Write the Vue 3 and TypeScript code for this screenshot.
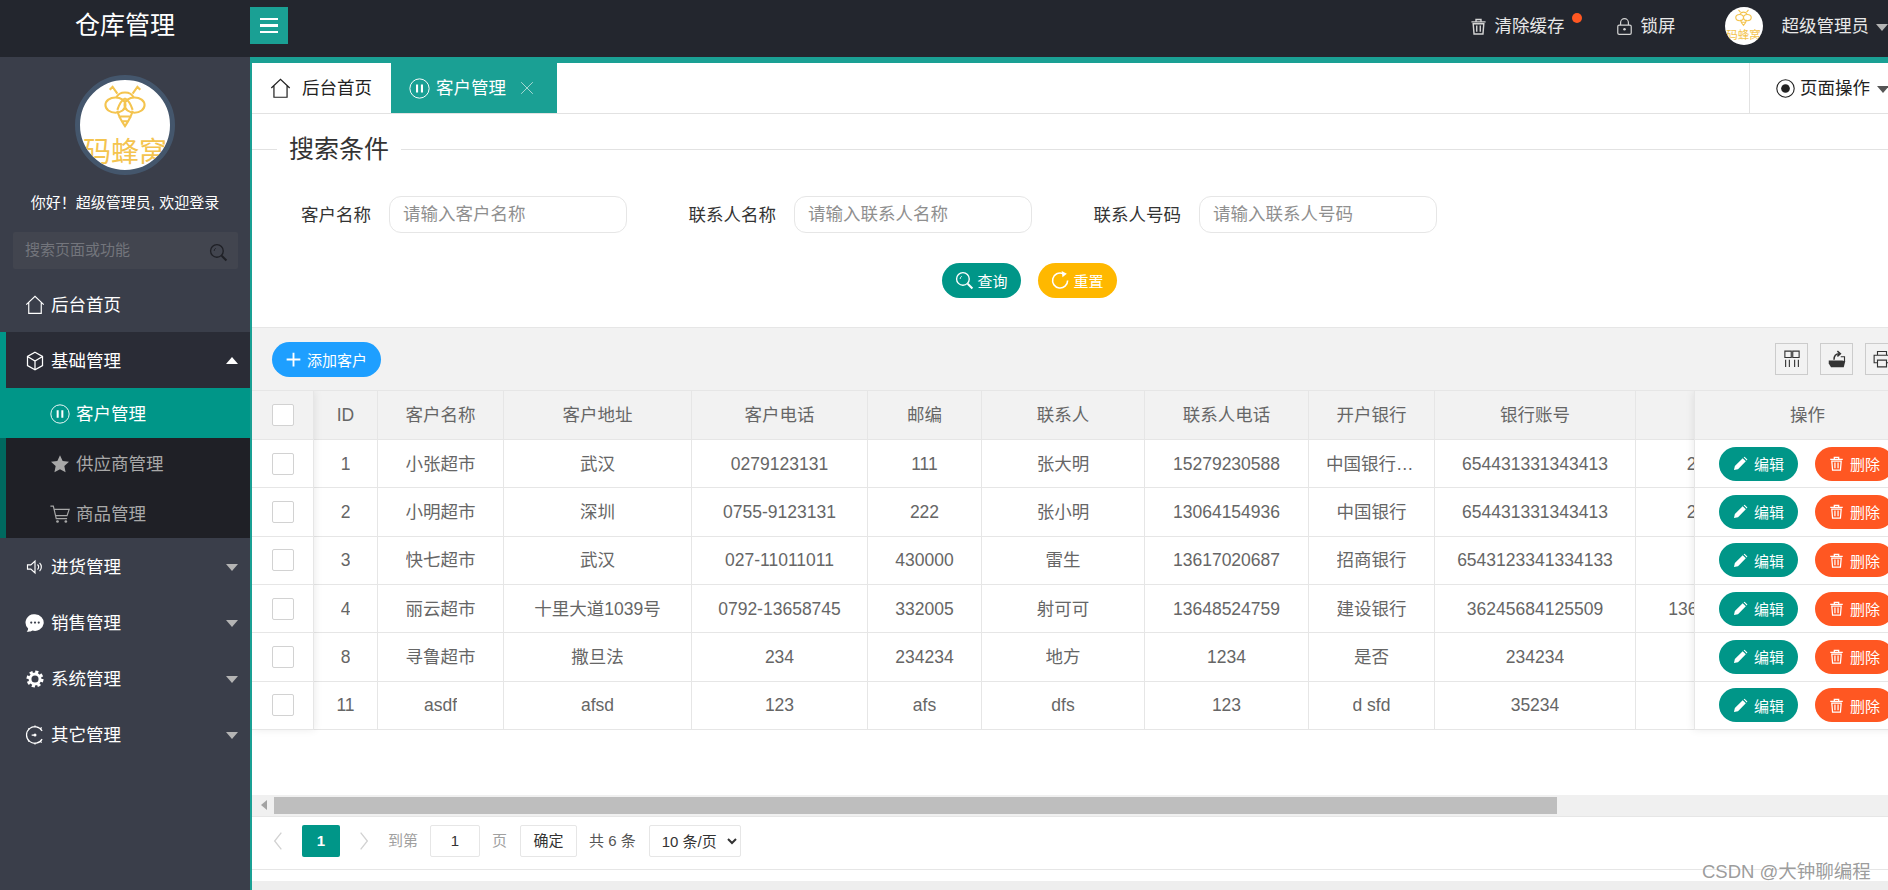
<script setup lang="ts">
const icons: Record<string, string> = {
  home: '<path d="M1.500 11.500 12 1.500l10.500 10M4.500 9v13h15V9" fill="none" stroke="currentColor" stroke-width="1.400"/>',
  cube: '<path d="M12 1.500 21 6.500v11L12 22.500 3 17.500v-11zM3 6.500 12 12l9-5.500M12 12v10.500" fill="none" stroke="currentColor" stroke-width="1.500"/>',
  speaker: '<path d="M3 9.500h4L12 5v14l-5-4.500H3zM15 9a4 4 0 0 1 0 6M17.500 7a7 7 0 0 1 0 10" fill="none" stroke="currentColor" stroke-width="1.400"/>',
  chat: '<path d="M12 1.500a10.500 10 0 1 1-3 19.600C7 22.500 3.500 22.800 2 22.200c1.200-.9 1.800-2.200 1.700-3.700A10 10 0 0 1 12 1.500z" fill="currentColor"/><circle cx="7.500" cy="11.500" r="1.300" fill="#3a3e4a"/><circle cx="12" cy="11.500" r="1.300" fill="#3a3e4a"/><circle cx="16.500" cy="11.500" r="1.300" fill="#3a3e4a"/>',
  gear: '<circle cx="12" cy="12" r="8.500" fill="none" stroke="currentColor" stroke-width="3.500" stroke-dasharray="3.700 2.975"/><circle cx="12" cy="12" r="6" fill="none" stroke="currentColor" stroke-width="3.500"/>',
  other: '<path d="M20.500 7A10 10 0 1 0 20.500 17M12 12H8M12 .5v2.500M12 21v2.500M4 4l1.500 1.500M4 20l1.500-1.500M18.500 4.500 20 3M18.500 19.500 20 21" fill="none" stroke="currentColor" stroke-width="1.500"/><circle cx="12" cy="12" r="1.800" fill="currentColor"/>',
  star: '<path d="m12 1.500 3.200 7 7.600.9-5.600 5.100 1.500 7.500L12 18.300l-6.700 3.700 1.500-7.500L1.200 9.400l7.600-.9z" fill="currentColor"/>',
  cart: '<path d="M.5 2.500H4l3.500 15h13M5.500 6.500h17.500l-2.500 7.500H7" fill="none" stroke="currentColor" stroke-width="1.400"/><circle cx="9" cy="21" r="1.600" fill="currentColor"/><circle cx="19" cy="21" r="1.600" fill="currentColor"/>',
  pause: '<circle cx="12" cy="12" r="11" fill="none" stroke="currentColor" stroke-width="1.100"/><path d="M9.200 7.500v9M14.800 7.500v9" stroke="currentColor" stroke-width="2.400"/>',
  trash: '<path d="M2 5.500h20M8.500 4.500V2h7v2.500" fill="none" stroke="currentColor" stroke-width="2"/><path d="M4.500 8h15l-1.200 14.500H5.700zM9.500 10.500v9M14.500 10.500v9" fill="none" stroke="currentColor" stroke-width="2"/>',
  lock: '<rect x="2.500" y="10" width="19" height="13" rx="2" fill="none" stroke="currentColor" stroke-width="1.700"/><path d="M6.500 10V6.500a5.500 5.500 0 0 1 11 0V10" fill="none" stroke="currentColor" stroke-width="1.700"/><circle cx="12" cy="16" r="1.800" fill="currentColor"/>',
  radio: '<circle cx="12" cy="12" r="11" fill="none" stroke="currentColor" stroke-width="1.400"/><circle cx="12" cy="12" r="5.500" fill="currentColor"/>',
  search: '<circle cx="10" cy="10" r="8" fill="none" stroke="currentColor" stroke-width="1.700"/><path d="M6.500 10a3.500 3.500 0 0 1 2-3.200" fill="none" stroke="currentColor" stroke-width="1.200"/><path d="m16 16 6 6" stroke="currentColor" stroke-width="2.600"/>',
  refresh: '<path d="M21 12A9.500 9.500 0 1 1 15 3.200" fill="none" stroke="currentColor" stroke-width="2"/><path d="m13.500 0 6.500 3.500-5.500 4.500z" fill="currentColor"/>',
  pencil: '<path d="m1.500 22.500 1.500-6.500L15.500 3.500l5 5L8 21zM17 2l1.500-1 4.500 4.500-1 1.500z" fill="currentColor"/>',
  plus: '<path d="M12 1v22M1 12h22" stroke="currentColor" stroke-width="3"/>',
  cols: '<path d="M2.500 1.500h8.500v8.500H2.500zM13 1.500h8.500v8.500H13zM3.500 13v9.500M8.500 13v9.500M15.500 13v9.500M20.500 13v9.500" fill="none" stroke="currentColor" stroke-width="1.500"/>',
  exportFile: '<path d="M1 14h18l4 1-2 8H4l-3-5z" fill="currentColor"/><path d="M8 13c0-6 3-8 7-8M12.500 1.500l4 3.500-4 3.500" fill="none" stroke="currentColor" stroke-width="2"/><path d="M17 9h5v7" fill="none" stroke="currentColor" stroke-width="1.500"/>',
  print: '<path d="M6 7V2h12v5M6 17H1.500V7h21v10H18M6 13.500h12v9H6z" fill="none" stroke="currentColor" stroke-width="1.500"/>',
  close: '<path d="m2 2 20 20M22 2 2 22" stroke="currentColor" stroke-width="1.500"/>'
}

const topNav = [
  { icon: 'speaker', label: '进货管理' },
  { icon: 'chat', label: '销售管理' },
  { icon: 'gear', label: '系统管理' },
  { icon: 'other', label: '其它管理' }
]
const subNav = [
  { icon: 'pause', label: '客户管理', active: true },
  { icon: 'star', label: '供应商管理', active: false },
  { icon: 'cart', label: '商品管理', active: false }
]
const headers = ['', 'ID', '客户名称', '客户地址', '客户电话', '邮编', '联系人', '联系人电话', '开户银行', '银行账号', '']
const rows = [
  ['1', '小张超市', '武汉', '0279123131', '111', '张大明', '15279230588', '中国银行武汉支行', '654431331343413', '2791231310'],
  ['2', '小明超市', '深圳', '0755-9123131', '222', '张小明', '13064154936', '中国银行', '654431331343413', '2791231310'],
  ['3', '快七超市', '武汉', '027-11011011', '430000', '雷生', '13617020687', '招商银行', '6543123341334133', '12'],
  ['4', '丽云超市', '十里大道1039号', '0792-13658745', '332005', '射可可', '13648524759', '建设银行', '36245684125509', '13648524759@q'],
  ['8', '寻鲁超市', '撒旦法', '234', '234234', '地方', '1234', '是否', '234234', '234'],
  ['11', 'asdf', 'afsd', '123', 'afs', 'dfs', '123', 'd sfd', '35234', '123']
]
const searchFields = [
  { label: '客户名称', placeholder: '请输入客户名称' },
  { label: '联系人名称', placeholder: '请输入联系人名称' },
  { label: '联系人号码', placeholder: '请输入联系人号码' }
]
</script>

<template>
  <div class="viewport">
    <div class="frame">
      <header class="topbar">
        <div class="brand">仓库管理</div>
        <button class="toggle" type="button"><span></span><span></span><span></span></button>
        <div class="top-right">
          <div class="top-item clear">
            <svg class="ti" viewBox="0 0 24 24" v-html="icons.trash"></svg>
            <span>清除缓存</span>
            <i class="dot"></i>
          </div>
          <div class="top-item lock">
            <svg class="ti" viewBox="0 0 24 24" v-html="icons.lock"></svg>
            <span>锁屏</span>
          </div>
          <div class="avatar">
            <svg class="mini-bee" viewBox="0 0 44 46">
              <g fill="none" stroke="#f4c44f" stroke-width="3">
                <path d="M14 8 9 2M30 8l5-6M13 13c3-7 15-7 18 0" />
                <ellipse cx="12" cy="22" rx="10" ry="8" />
                <ellipse cx="32" cy="22" rx="10" ry="8" />
                <path d="M14 28c2 8 6 12 8 14 2-2 6-6 8-14M15 34h14" />
              </g>
            </svg>
            <span class="mini-text">码蜂窝</span>
          </div>
          <div class="top-item user">
            <span>超级管理员</span>
            <i class="caret down"></i>
          </div>
        </div>
      </header>

      <div class="body">
        <aside class="sidebar">
          <div class="logo">
            <svg class="bee" viewBox="0 0 44 46">
              <g fill="none" stroke="#f4c44f" stroke-width="2.200">
                <path d="M14 9 9 2 6 5M30 9l5-7 3 3M13 13c3-7 15-7 18 0" />
                <ellipse cx="12" cy="21" rx="10.500" ry="8" />
                <ellipse cx="32" cy="21" rx="10.500" ry="8" />
                <path d="M22 14c-4 2-6 6-8 12M22 14c4 2 6 6 8 12M14 27c2 8 6 13 8 16 2-3 6-8 8-16M15 33h14M18 38h8" />
              </g>
            </svg>
            <span class="logo-text">码蜂窝</span>
          </div>
          <div class="welcome">你好！超级管理员, 欢迎登录</div>
          <div class="side-search">
            <span>搜索页面或功能</span>
            <svg class="side-search-ic" viewBox="0 0 24 24" v-html="icons.search"></svg>
          </div>

          <nav class="nav">
            <div class="nav-item">
              <svg class="nav-ic" viewBox="0 0 24 24" v-html="icons.home"></svg>
              <span>后台首页</span>
            </div>
            <div class="nav-item open">
              <svg class="nav-ic" viewBox="0 0 24 24" v-html="icons.cube"></svg>
              <span>基础管理</span>
              <i class="caret up"></i>
            </div>
            <div
              v-for="s in subNav"
              :key="s.label"
              class="sub-item"
              :class="{ active: s.active }"
            >
              <svg class="nav-ic" viewBox="0 0 24 24" v-html="icons[s.icon]"></svg>
              <span>{{ s.label }}</span>
            </div>
            <div v-for="n in topNav" :key="n.label" class="nav-item">
              <svg class="nav-ic" viewBox="0 0 24 24" v-html="icons[n.icon]"></svg>
              <span>{{ n.label }}</span>
              <i class="caret down"></i>
            </div>
          </nav>
        </aside>

        <main class="main">
          <div class="tabs">
            <div class="tab">
              <svg class="tab-ic" viewBox="0 0 24 24" v-html="icons.home"></svg>
              <span>后台首页</span>
            </div>
            <div class="tab current">
              <svg class="tab-ic" viewBox="0 0 24 24" v-html="icons.pause"></svg>
              <span>客户管理</span>
              <svg class="tab-x" viewBox="0 0 24 24" v-html="icons.close"></svg>
            </div>
            <div class="page-ops">
              <svg class="tab-ic" viewBox="0 0 24 24" v-html="icons.radio"></svg>
              <span>页面操作</span>
              <i class="caret down dark"></i>
            </div>
          </div>

          <section class="search">
            <div class="legend"><i></i><span>搜索条件</span><b></b></div>
            <div class="fields">
              <label v-for="f in searchFields" :key="f.label" class="field">
                <span class="field-label">{{ f.label }}</span>
                <input class="field-input" type="text" :placeholder="f.placeholder" />
              </label>
            </div>
            <div class="search-btns">
              <button class="pill green" type="button">
                <svg viewBox="0 0 24 24" v-html="icons.search"></svg>查询
              </button>
              <button class="pill yellow" type="button">
                <svg viewBox="0 0 24 24" v-html="icons.refresh"></svg>重置
              </button>
            </div>
          </section>

          <section class="toolbar">
            <button class="pill blue" type="button">
              <svg viewBox="0 0 24 24" v-html="icons.plus"></svg>添加客户
            </button>
            <div class="tools">
              <span class="tool"><svg viewBox="0 0 24 24" v-html="icons.cols"></svg></span>
              <span class="tool"><svg viewBox="0 0 24 24" v-html="icons.exportFile"></svg></span>
              <span class="tool"><svg viewBox="0 0 24 24" v-html="icons.print"></svg></span>
            </div>
          </section>

          <section class="table-wrap">
            <div class="row head">
              <div v-for="(h, i) in headers" :key="i" class="cell">{{ h }}</div>
            </div>
            <div v-for="r in rows" :key="r[0]" class="row">
              <div class="cell"></div>
              <div v-for="(c, i) in r" :key="i" class="cell"><span class="clip">{{ c }}</span></div>
              <div class="cell"></div>
            </div>

            <div class="fixed-left">
              <div class="fixed-cell head"><i class="check"></i></div>
              <div v-for="r in rows" :key="r[0]" class="fixed-cell"><i class="check"></i></div>
            </div>
            <div class="fixed-right">
              <div class="fixed-cell head">操作</div>
              <div v-for="r in rows" :key="r[0]" class="fixed-cell ops">
                <button class="op green" type="button">
                  <svg viewBox="0 0 24 24" v-html="icons.pencil"></svg>编辑
                </button>
                <button class="op red" type="button">
                  <svg viewBox="0 0 24 24" v-html="icons.trash"></svg>删除
                </button>
              </div>
            </div>
          </section>

          <div class="hscroll">
            <i class="arrow"></i>
            <div class="thumb"></div>
          </div>

          <div class="pager">
            <svg class="chev" viewBox="0 0 12 24"><path d="M10 2 2 12l8 10" fill="none" stroke="currentColor" stroke-width="1.600" /></svg>
            <span class="page-cur">1</span>
            <svg class="chev next" viewBox="0 0 12 24"><path d="m2 2 8 10-8 10" fill="none" stroke="currentColor" stroke-width="1.600" /></svg>
            <span class="muted to">到第</span>
            <span class="box page-input">1</span>
            <span class="muted pg">页</span>
            <span class="box confirm">确定</span>
            <span class="total">共 6 条</span>
            <select class="box size">
              <option>10 条/页</option>
            </select>
          </div>
          <div class="pager-gap"></div>
          <div class="foot"></div>
        </main>
      </div>
      <div class="mark">CSDN @大钟聊编程</div>
    </div>
  </div>
</template>

<style>
html, body { margin: 0; overflow: hidden; background: #fff; }
</style>

<style scoped>
.viewport { width: 1888px; height: 890px; overflow: hidden; font-family: "Liberation Sans", "Noto Sans CJK SC", sans-serif; font-size: 17.5px; line-height: 24px; color: #333; }
.frame { position: relative; width: 1920px; height: 890px; display: flex; flex-direction: column; }
i { display: block; }
svg { display: block; flex: none; }
button { font-family: inherit; border: 0; padding: 0; }

.topbar { height: 57px; flex: none; display: flex; align-items: flex-start; background: #23262e; color: #fff; }
.brand { width: 250px; height: 57px; line-height: 51px; text-align: center; font-size: 25px; }
.toggle { width: 38px; height: 37px; margin-top: 7px; background: #1aa094; display: flex; flex-direction: column; align-items: center; justify-content: center; gap: 4px; }
.toggle span { width: 18px; height: 2.500px; background: #fff; }
.top-right { margin-left: auto; display: flex; align-items: center; height: 52px; padding-right: 32px; color: #e8e8e8; }
.top-item { display: flex; align-items: center; position: relative; }
.ti { width: 17px; height: 17px; margin-right: 8px; color: #d4d4d4; }
.clear { margin-right: 51px; }
.dot { position: absolute; right: -17px; top: -1px; width: 10px; height: 10px; border-radius: 50%; background: #ff5722; }
.lock { margin-right: 49px; }
.avatar { position: relative; width: 38px; height: 38px; border-radius: 50%; background: #fff; overflow: hidden; margin-right: 19px; display: flex; flex-direction: column; align-items: center; }
.mini-bee { width: 17px; height: 18px; margin-top: 2px; }
.mini-text { color: #f4c44f; font-size: 11.500px; line-height: 14px; white-space: nowrap; margin-top: 1px; }
.user { gap: 7px; }

.caret { width: 0; height: 0; border-left: 6.500px solid transparent; border-right: 6.500px solid transparent; }
.caret.down { border-top: 7px solid #b4b4b4; margin-top: 2px; }
.caret.up { border-bottom: 7px solid #fff; }
.caret.dark { border-top-color: #555; }

.body { flex: 1; min-height: 0; display: flex; }
.sidebar { width: 250px; flex: none; background: #3a3e4a; color: #fff; display: flex; flex-direction: column; }
.logo { position: relative; box-sizing: border-box; width: 100px; height: 100px; margin: 18px auto 0; border: 5px solid #44566c; border-radius: 50%; background: #fff; overflow: hidden; display: flex; flex-direction: column; align-items: center; }
.bee { width: 42px; height: 44px; margin-top: 5px; flex: none; }
.logo-text { color: #f4c44f; font-size: 28px; line-height: 30px; white-space: nowrap; margin-top: 9px; flex: none; }
.welcome { margin-top: 18px; text-align: center; font-size: 15px; line-height: 20px; }
.side-search { box-sizing: border-box; margin: 19px 12px 7px 13px; height: 37px; border-radius: 2px; background: #42454f; color: #73757c; font-size: 15px; display: flex; align-items: center; justify-content: space-between; padding: 0 10px 2px 12px; }
.side-search-ic { width: 19px; height: 19px; color: #1f2026; margin-top: 6px; }
.nav-item { height: 56px; display: flex; align-items: center; padding: 2px 12px 0 25px; gap: 6px; box-sizing: border-box; }
.nav-item .caret { margin-left: auto; margin-top: -2px; }
.nav-item .caret.down { margin-top: 0; }
.nav-ic { width: 20px; height: 20px; }
.nav-item.open { background: #2a2c36; border-left: 6px solid #009688; padding-left: 19px; }
.sub-item { height: 50px; display: flex; align-items: center; gap: 6px; padding: 2px 0 0 44px; box-sizing: border-box; background: #1f2026; border-left: 6px solid #00695f; color: #a8a8a8; }
.sub-item.active { background: #009688; border-left-color: #009688; color: #fff; }

.main { flex: 1; min-width: 0; display: flex; flex-direction: column; border-top: 6px solid #1aa094; border-left: 2px solid #1aa094; background: #fff; }
.tabs { flex: none; height: 50px; display: flex; border-bottom: 1px solid #e2e2e2; color: #222; }
.tab { box-sizing: border-box; display: flex; align-items: center; height: 50px; width: 139px; padding-left: 18px; gap: 11px; }
.tab-ic { width: 21px; height: 21px; }
.tab.current { width: 166px; padding-left: 18px; gap: 6px; background: #1aa094; color: #fff; }
.tab-x { width: 14px; height: 14px; margin-left: 8px; color: #b7dfda; }
.page-ops { box-sizing: border-box; margin-left: auto; width: 171px; display: flex; align-items: center; padding-left: 26px; border-left: 1px solid #e2e2e2; gap: 5px; }
.page-ops .tab-ic { width: 19px; height: 19px; }
.page-ops .caret { margin-left: 2px; }

.search { flex: none; height: 213px; box-sizing: border-box; padding-top: 23px; }
.legend { display: flex; align-items: center; height: 24px; font-size: 25px; color: #333; }
.legend i { width: 25px; border-top: 1px solid #e2e2e2; }
.legend span { padding: 0 12px; line-height: 24px; }
.legend b { flex: 1; border-top: 1px solid #e2e2e2; }
.fields { display: flex; gap: 49px; margin-top: 35px; padding-left: 19px; }
.field { display: flex; align-items: center; gap: 18px; }
.field-label { width: 100px; text-align: right; color: #333; }
.field-input { box-sizing: border-box; width: 238px; height: 37px; padding: 0 13px; border: 1px solid #e6e6e6; border-radius: 12px; font: inherit; background: #fff; outline: 0; }
.field-input::placeholder { color: #8f8f8f; opacity: 1; }
.search-btns { width: 1555px; display: flex; justify-content: center; gap: 17px; margin-top: 30px; }
.pill { height: 35px; width: 79px; border-radius: 18px; display: flex; align-items: center; justify-content: center; gap: 3px; color: #fff; font-size: 15px; }
.pill svg { width: 19px; height: 19px; }
.green { background: #009688; }
.yellow { background: #ffb800; }
.blue { background: #1e9fff; width: 109px; gap: 6px; }
.blue svg { width: 15px; height: 15px; }

.toolbar { flex: none; height: 64px; box-sizing: border-box; border-top: 1px solid #e6e6e6; border-bottom: 1px solid #e6e6e6; background: #f2f2f2; display: flex; align-items: center; justify-content: space-between; padding: 0 22px 0 20px; }
.tools { display: flex; gap: 12px; }
.tool { box-sizing: border-box; width: 33px; height: 32px; border: 1px solid #ccc; display: flex; align-items: center; justify-content: center; color: #333; }
.tool svg { width: 18px; height: 18px; }

.table-wrap { position: relative; flex: none; height: 404px; overflow: hidden; color: #666; }
.row { display: grid; grid-template-columns: 62px 64px 126px 188px 176px 114px 163px 164px 126px 201px 200px; grid-template-rows: minmax(0, 1fr); height: 48.330px; box-sizing: border-box; border-bottom: 1px solid #e6e6e6; }
.row.head { height: 49px; background: #f2f2f2; }
.cell { box-sizing: border-box; border-right: 1px solid #e6e6e6; display: flex; align-items: center; justify-content: center; padding: 0 17px; min-width: 0; white-space: nowrap; }
.clip { display: block; overflow: hidden; text-overflow: ellipsis; }
.fixed-left, .fixed-right { position: absolute; top: 0; background: #fff; }
.fixed-left { left: 0; width: 62px; box-shadow: 1px 0 8px rgba(0, 0, 0, .08); border-right: 1px solid #e6e6e6; box-sizing: border-box; }
.fixed-right { left: 1442px; width: 226px; box-shadow: -1px 0 8px rgba(0, 0, 0, .08); border-left: 1px solid #e6e6e6; box-sizing: border-box; }
.fixed-cell { height: 48.330px; box-sizing: border-box; border-bottom: 1px solid #e6e6e6; display: flex; align-items: center; justify-content: center; gap: 17px; }
.fixed-cell.head { height: 49px; background: #f2f2f2; }
.fixed-cell.ops { padding-right: 2px; }
.check { box-sizing: border-box; width: 22px; height: 22px; background: #fff; border: 1px solid #d2d2d2; border-radius: 2px; }
.op { width: 79px; height: 34px; border-radius: 17px; display: flex; align-items: center; justify-content: center; gap: 6px; color: #fff; font-size: 15px; flex: none; }
.op svg { width: 15px; height: 15px; }
.red { background: #ff5722; }

.hscroll { flex: none; height: 22px; box-sizing: border-box; border-bottom: 1px solid #e6e6e6; background: #f0f0f0; display: flex; align-items: center; padding: 0 0 1px 9px; }
.arrow { width: 0; height: 0; border-top: 5px solid transparent; border-bottom: 5px solid transparent; border-right: 6px solid #a3a3a3; }
.thumb { width: 1283px; height: 17px; margin-left: 7px; background: #bebebe; }

.pager { flex: none; height: 53px; box-sizing: border-box; border-bottom: 1px solid #e6e6e6; display: flex; align-items: center; padding: 0 0 4px 21px; font-size: 15px; color: #333; }
.chev { width: 10px; height: 24px; color: #d2d2d2; }
.next { margin-left: 19px; }
.page-cur { width: 38px; height: 32px; margin-left: 19px; border-radius: 2px; background: #009688; color: #fff; font-weight: 700; font-size: 15px; line-height: 32px; text-align: center; }
.muted { color: #a0a0a0; }
.to { margin-left: 19px; }
.box { box-sizing: border-box; height: 32px; border: 1px solid #e6e6e6; border-radius: 2px; background: #fff; text-align: center; line-height: 30px; font-family: inherit; font-size: 15px; color: #333; }
.page-input { width: 50px; margin-left: 12px; }
.pg { margin-left: 12px; }
.confirm { width: 57px; margin-left: 13px; }
.total { margin-left: 12px; color: #555; }
.size { width: 92px; margin-left: 13px; padding: 0 0 0 8px; text-align: left; }
.pager-gap { flex: none; height: 11px; }
.foot { flex: 1; background: #eeeeee; }

.mark { position: absolute; left: 1702px; top: 860px; font-size: 18.500px; line-height: 24px; color: rgba(130, 130, 130, .8); text-shadow: 0 0 2px #fff; white-space: nowrap; }
</style>
